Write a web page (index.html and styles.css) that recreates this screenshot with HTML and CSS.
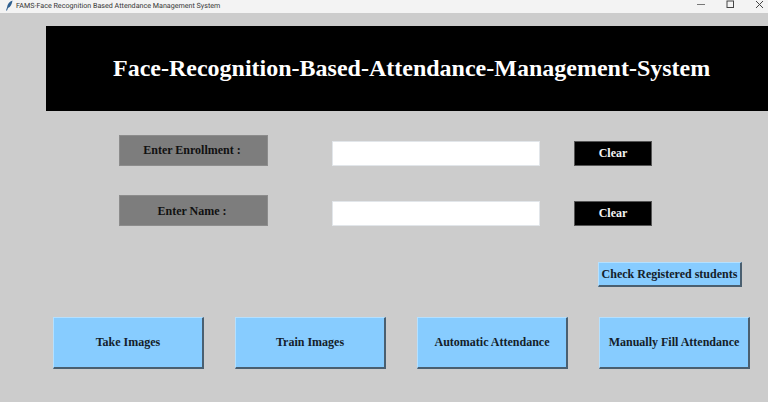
FILE: index.html
```html
<!DOCTYPE html>
<html lang="en">

<head>
    <meta charset="UTF-8">
    <title>FAMS</title>
    <link rel="stylesheet" href="styles.css">
</head>

<body>

    <div class="title_bar">
        <svg class="feather" width="8" height="11" viewBox="0 0 8 11">
            <path d="M7.5 0.5C4.5 1.5 2.5 4 2 7.5L1 10.5L2 10.5L3 8C5.5 7 7 4 7.5 0.5Z" fill="#2f5f8f" />
        </svg>
        <div class="title_text">FAMS-Face Recognition Based Attendance Management System</div>
        <div class="win_btns">
            <svg width="9" height="9" viewBox="0 0 9 9">
                <path d="M0 4.5H8" stroke="#777" stroke-width="1" />
            </svg>
            <svg width="9" height="9" viewBox="0 0 9 9">
                <rect x="1" y="1" width="6.5" height="6.5" fill="none" stroke="#444" stroke-width="1" />
            </svg>
            <svg width="9" height="9" viewBox="0 0 9 9">
                <path d="M1 1L8 8M8 1L1 8" stroke="#444" stroke-width="1" />
            </svg>
        </div>
    </div>

    <div class="banner">Face-Recognition-Based-Attendance-Management-System</div>

    <div class="form_row first_row">
        <div class="field_label">Enter Enrollment :</div>
        <input class="field_input" type="text">
        <div class="clear_btn">Clear</div>
    </div>

    <div class="form_row">
        <div class="field_label name_label">Enter Name :</div>
        <input class="field_input" type="text">
        <div class="clear_btn">Clear</div>
    </div>

    <div class="check_row">
        <div class="blue_btn check_btn">Check Registered students</div>
    </div>

    <div class="action_row">
        <div class="blue_btn action_btn">Take Images</div>
        <div class="blue_btn action_btn">Train Images</div>
        <div class="blue_btn action_btn">Automatic Attendance</div>
        <div class="blue_btn action_btn">Manually Fill Attendance</div>
    </div>

</body>

</html>
```

FILE: styles.css
```css
* {
    margin: 0;
    padding: 0;
    box-sizing: border-box;
}

body {
    width: 768px;
    height: 402px;
    overflow: hidden;
    background-color: #ccc;
    font-family: "Liberation Serif", serif;
    font-weight: bold;
}

.title_bar {
    display: flex;
    align-items: center;
    height: 13px;
    padding-left: 5px;
    background-color: #f3f3f3;
}

.feather {
    margin-top: -2px;
}

.title_text {
    margin-left: 3px;
    margin-top: -2px;
    font-family: Roboto, sans-serif;
    font-weight: normal;
    font-size: 7.15px;
    text-rendering: geometricPrecision;
    color: #333;
}

.win_btns {
    display: flex;
    gap: 20px;
    margin-left: auto;
    margin-right: 4px;
    margin-top: -4px;
}

.banner {
    height: 85px;
    margin: 13px 0 0 46px;
    padding-left: 67px;
    background-color: #000;
    color: #fff;
    font-size: 24px;
    line-height: 85px;
    white-space: nowrap;
}

.form_row {
    display: flex;
    align-items: flex-end;
    margin: 29px 0 0 119px;
}

.first_row {
    margin-top: 24px;
}

.field_label {
    width: 149px;
    height: 31px;
    padding-right: 3px;
    background-color: #7d7d7d;
    border: 1px solid #8c8c8c;
    color: #111;
    font-size: 12px;
    line-height: 29px;
    text-align: center;
}

.name_label {
    line-height: 31px;
}

.field_input {
    width: 208px;
    height: 25px;
    margin-left: 64px;
    background-color: #fff;
    border: 1px solid #e2e6ea;
    outline: none;
}

.clear_btn {
    width: 78px;
    height: 25px;
    margin-left: 34px;
    background-color: #000;
    border: 1px solid #555;
    color: #f4f4f4;
    font-size: 12px;
    line-height: 22px;
    text-align: center;
}

.blue_btn {
    background-color: #87ccff;
    border-top: 1px solid #b4e0ff;
    border-left: 1px solid #b4e0ff;
    border-right: 2px solid #4a5f70;
    border-bottom: 2px solid #4a5f70;
    color: #14202a;
    text-align: center;
    white-space: nowrap;
}

.check_row {
    display: flex;
    margin: 36px 0 0 598px;
}

.check_btn {
    width: 144px;
    height: 25px;
    font-size: 12px;
    line-height: 22px;
}

.action_row {
    display: flex;
    gap: 31px;
    margin: 30px 0 0 53px;
}

.action_btn {
    width: 151px;
    height: 52px;
    font-size: 12px;
    line-height: 49px;
}
```
